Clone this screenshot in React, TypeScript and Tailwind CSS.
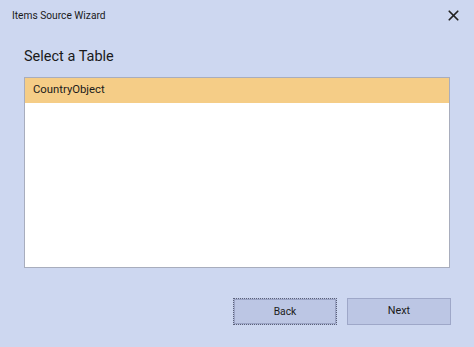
import { X } from 'lucide-react'

export default function App() {
  return (
    <div className="w-[474px] h-[347px] bg-[#cdd7f0] flex flex-col font-['Roboto',sans-serif] text-[#1a1a1a] overflow-hidden">
      {/* Title bar */}
      <div className="h-[31px] flex items-center justify-between pl-[12px] pr-[12.5px]">
        <span className="text-[10.2px]">Items Source Wizard</span>
        <X size={17} strokeWidth={2.4} className="text-[#222]" />
      </div>

      <div className="flex-1 flex flex-col px-[24px]">
        <h1 className="text-[14.5px] mt-[15px] leading-[22px]">Select a Table</h1>

        {/* Table list */}
        <div className="mt-[9px] h-[191px] w-[426px] bg-white border border-[#a8adbd] flex flex-col">
          <div className="h-[25px] bg-[#f5cd87] flex items-center px-[8px] text-[11.3px]">CountryObject</div>
        </div>

        {/* Buttons */}
        <div className="mt-[30px] flex justify-end gap-[10px] w-[427px]">
          <button className="w-[104px] h-[27px] bg-[#bcc6e4] border border-dotted border-[#5a6078] outline outline-1 -outline-offset-2 outline-[#9aa3c4] text-[10.3px]">
            Back
          </button>
          <button className="w-[104px] h-[27px] bg-[#bcc6e4] border border-[#9ea7c8] text-[10.8px]">
            Next
          </button>
        </div>
      </div>
    </div>
  )
}
